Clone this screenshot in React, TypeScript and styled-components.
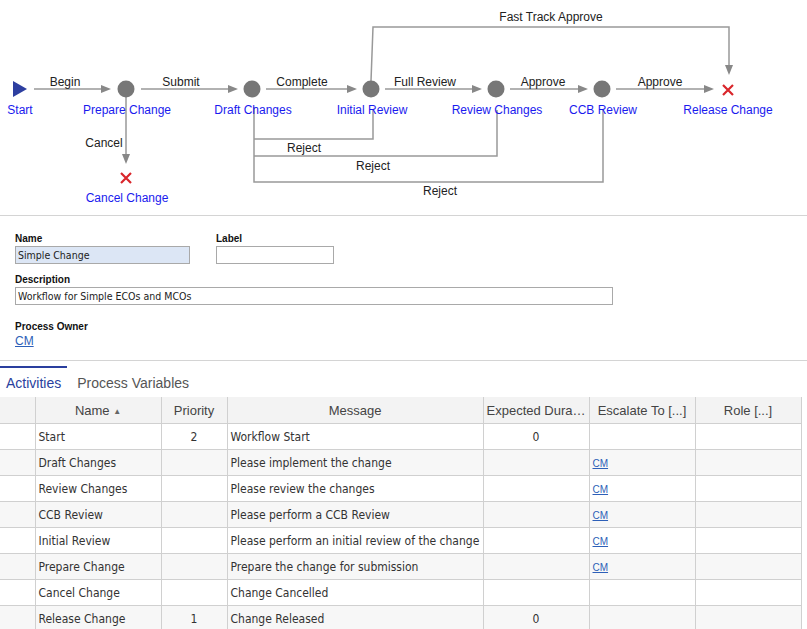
import React from 'react'
import styled, { createGlobalStyle } from 'styled-components'

const Global = createGlobalStyle`
  body { margin: 0; background: #fff; font-family: "Liberation Sans", Arial, sans-serif; }
`

const Page = styled.div`
  width: 807px;
  height: 629px;
  overflow: hidden;
`

const Diagram = styled.svg`
  display: block;
  width: 807px;
  height: 215px;
  border-bottom: 1px solid #d4d4d4;
  font-family: "Liberation Sans", Arial, sans-serif;
  font-size: 12px;
`

const Form = styled.div`
  padding: 17px 15px 12px;
  display: flex;
  flex-direction: column;
  gap: 10px;
  border-bottom: 1px solid #d4d4d4;
  font-family: "DejaVu Sans Condensed", "DejaVu Sans", Tahoma, sans-serif;
`

const Row = styled.div`
  display: flex;
  gap: 26px;
`

const Field = styled.div`
  display: flex;
  flex-direction: column;
  gap: 2px;
`

const Label = styled.label`
  font-size: 10px;
  font-weight: bold;
  color: #111;
  font-family: "Liberation Sans", Arial, sans-serif;
`

const Input = styled.div<{ $w: number; $filled?: boolean }>`
  width: ${p => p.$w}px;
  height: 18px;
  box-sizing: border-box;
  border: 1px solid #a9a9a9;
  background: ${p => (p.$filled ? '#dce6f5' : '#fff')};
  font-size: 10.5px;
  line-height: 16px;
  padding: 0 2px;
  color: #222;
`

const Link = styled.a<{ $size?: number }>`
  color: #2d5fb8;
  text-decoration: underline;
  font-size: ${p => p.$size ?? 12}px;
  font-family: "Liberation Sans", Arial, sans-serif;
`

const Tabs = styled.div`
  display: flex;
  padding-top: 5px;
  height: 36px;
  box-sizing: border-box;
`

const Tab = styled.div<{ $active?: boolean }>`
  padding: 7px 6px 0;
  margin-right: 4px;
  font-size: 14px;
  color: ${p => (p.$active ? '#2a3f9e' : '#555')};
  border-top: 2px solid ${p => (p.$active ? '#2a3f9e' : 'transparent')};
`

const Table = styled.table`
  border-collapse: collapse;
  table-layout: fixed;
  width: 801px;
  font-family: "DejaVu Sans Condensed", "DejaVu Sans", Tahoma, sans-serif;
  font-size: 12px;
  color: #333;
`

const Th = styled.th`
  height: 26px;
  background: #f3f3f3;
  border: 1px solid #d0d0d0;
  border-top: none;
  font-family: "Liberation Sans", Arial, sans-serif;
  font-weight: normal;
  font-size: 13px;
  color: #444;
  white-space: nowrap;
  overflow: hidden;
  text-overflow: ellipsis;
  padding: 0 3px;
  &:first-child { border-left: none; }
`

const Sort = styled.span`
  font-size: 8px;
  color: #666;
  vertical-align: 1px;
`

const Tr = styled.tr<{ $shade: boolean }>`
  background: ${p => (p.$shade ? '#f7f7f7' : '#fff')};
`

const Td = styled.td<{ $center?: boolean }>`
  height: 25px;
  border: 1px solid #d0d0d0;
  padding: 0 3px;
  text-align: ${p => (p.$center ? 'center' : 'left')};
  white-space: nowrap;
  overflow: hidden;
  &:first-child { border-left: none; }
`

const G = '#999'
const Arrow = ({ x, y, dir }: { x: number; y: number; dir: 'r' | 'd' }) =>
  dir === 'r' ? (
    <polygon points={`${x},${y} ${x - 10},${y - 4} ${x - 10},${y + 4}`} fill="#888" />
  ) : (
    <polygon points={`${x},${y} ${x - 4},${y - 10} ${x + 4},${y - 10}`} fill="#888" />
  )

const Cross = ({ x, y }: { x: number; y: number }) => (
  <path d={`M${x - 5} ${y - 5}L${x + 5} ${y + 5}M${x + 5} ${y - 5}L${x - 5} ${y + 5}`} stroke="#d9262b" strokeWidth="2.2" />
)

const nodes = [
  { x: 126, name: 'Prepare Change' },
  { x: 252, name: 'Draft Changes' },
  { x: 371, name: 'Initial Review' },
  { x: 496, name: 'Review Changes' },
  { x: 602, name: 'CCB Review' },
]

const edges = [
  { a: 34, b: 111, t: 'Begin', tx: 65 },
  { a: 141, b: 238, t: 'Submit', tx: 181 },
  { a: 266, b: 357, t: 'Complete', tx: 302 },
  { a: 385, b: 482, t: 'Full Review', tx: 425 },
  { a: 510, b: 588, t: 'Approve', tx: 543 },
  { a: 616, b: 714, t: 'Approve', tx: 660 },
]

function Flow() {
  return (
    <Diagram>
      <g stroke={G} strokeWidth="1.5" fill="none">
        {edges.map(e => (
          <line key={e.a} x1={e.a} y1={89} x2={e.b - 8} y2={89} />
        ))}
        <line x1={126} y1={97} x2={126} y2={156} />
        <polyline points="371,81 373,27 729,27 729,66" />
        <polyline points="373,110 373,139 254,139" />
        <polyline points="497,110 497,156 254,156" />
        <polyline points="603,110 603,182 254,182 254,107" />
      </g>
      {edges.map(e => (
        <Arrow key={e.b} x={e.b} y={89} dir="r" />
      ))}
      <Arrow x={126} y={164} dir="d" />
      <Arrow x={729} y={75} dir="d" />
      <Arrow x={254} y={97} dir="d" />
      <polygon points="13,81 27,89 13,97" fill="#2d3fa0" />
      {nodes.map(n => (
        <circle key={n.x} cx={n.x} cy={89} r={8.5} fill="#777" />
      ))}
      <Cross x={728} y={90} />
      <Cross x={126} y={178} />
      <g fill="#1a1aee" textAnchor="middle">
        <text x={20} y={114}>Start</text>
        {nodes.map(n => (
          <text key={n.x} x={n.x + 1} y={114}>{n.name}</text>
        ))}
        <text x={728} y={114}>Release Change</text>
        <text x={127} y={202}>Cancel Change</text>
      </g>
      <g fill="#222" textAnchor="middle">
        {edges.map(e => (
          <text key={e.t + e.a} x={e.tx} y={86}>{e.t}</text>
        ))}
        <text x={104} y={147}>Cancel</text>
        <text x={551} y={21}>Fast Track Approve</text>
        <text x={304} y={152}>Reject</text>
        <text x={373} y={170}>Reject</text>
        <text x={440} y={195}>Reject</text>
      </g>
    </Diagram>
  )
}

const rows = [
  ['Start', '2', 'Workflow Start', '0', false],
  ['Draft Changes', '', 'Please implement the change', '', true],
  ['Review Changes', '', 'Please review the changes', '', true],
  ['CCB Review', '', 'Please perform a CCB Review', '', true],
  ['Initial Review', '', 'Please perform an initial review of the change', '', true],
  ['Prepare Change', '', 'Prepare the change for submission', '', true],
  ['Cancel Change', '', 'Change Cancelled', '', false],
  ['Release Change', '1', 'Change Released', '0', false],
] as const

export default function App() {
  return (
    <Page>
      <Global />
      <Flow />
      <Form>
        <Row>
          <Field>
            <Label>Name</Label>
            <Input $w={175} $filled>Simple Change</Input>
          </Field>
          <Field>
            <Label>Label</Label>
            <Input $w={118} />
          </Field>
        </Row>
        <Field>
          <Label>Description</Label>
          <Input $w={598}>Workflow for Simple ECOs and MCOs</Input>
        </Field>
        <Field style={{ marginTop: 6 }}>
          <Label>Process Owner</Label>
          <Link href="#">CM</Link>
        </Field>
      </Form>
      <Tabs>
        <Tab $active>Activities</Tab>
        <Tab>Process Variables</Tab>
      </Tabs>
      <Table>
        <colgroup>
          <col style={{ width: 35 }} />
          <col style={{ width: 126 }} />
          <col style={{ width: 66 }} />
          <col style={{ width: 256 }} />
          <col style={{ width: 106 }} />
          <col style={{ width: 106 }} />
          <col style={{ width: 106 }} />
        </colgroup>
        <thead>
          <tr>
            <Th />
            <Th>Name <Sort>▲</Sort></Th>
            <Th>Priority</Th>
            <Th>Message</Th>
            <Th>Expected Duration</Th>
            <Th>Escalate To [...]</Th>
            <Th>Role [...]</Th>
          </tr>
        </thead>
        <tbody>
          {rows.map((r, i) => (
            <Tr key={r[0]} $shade={i % 2 === 1}>
              <Td />
              <Td>{r[0]}</Td>
              <Td $center>{r[1]}</Td>
              <Td>{r[2]}</Td>
              <Td $center>{r[3]}</Td>
              <Td>{r[4] && <Link href="#" $size={10}>CM</Link>}</Td>
              <Td />
            </Tr>
          ))}
        </tbody>
      </Table>
    </Page>
  )
}
